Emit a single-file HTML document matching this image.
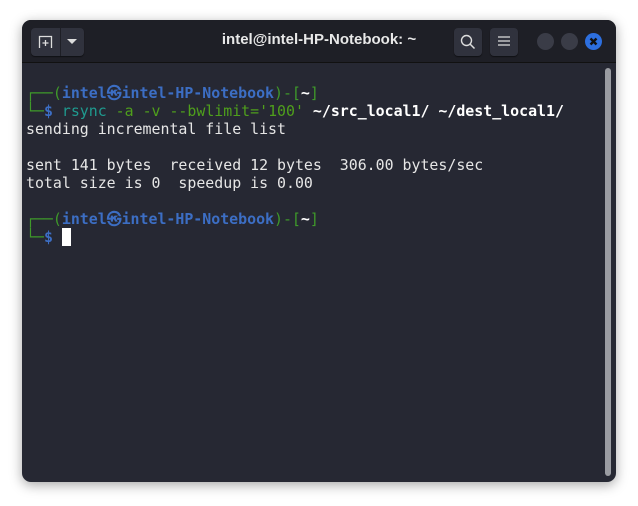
<!DOCTYPE html>
<html><head><style>
body{margin:0;width:638px;height:506px;background:#fff;position:relative;overflow:hidden;font-family:"Liberation Sans",sans-serif}
.win{position:absolute;left:22px;top:20px;width:594px;height:462px;background:#262833;border-radius:9px;box-shadow:0 3px 12px rgba(0,0,0,.35);overflow:hidden}
.tb{position:absolute;left:0;top:0;width:594px;height:42px;background:#1e1f26;border-bottom:1px solid #111}
.btn{position:absolute;top:8px;height:28px;background:#30323d;border-radius:4px;box-shadow:0 1px 1px rgba(0,0,0,.5)}
.title{position:absolute;top:11px;left:0;width:594px;text-align:center;color:#e8e8e8;font-weight:bold;font-size:15px}
.c{position:absolute;top:13px;width:17px;height:17px;border-radius:50%;background:#3a3c47}
.term{position:absolute;left:4px;top:64px;font-family:"DejaVu Sans Mono","Liberation Mono",monospace;font-size:14.9px;line-height:18px;color:#e6e6e6;white-space:pre}
.g{color:#3f9a2a}.b{color:#3c6ec4;font-weight:bold}.t{color:#1f9a8f}.a{color:#4f9f1c}.w{color:#fff;font-weight:bold}
.sb{position:absolute;left:583px;top:48px;width:6px;height:408px;background:#9a9ca2;border-radius:3px}
</style></head><body>
<div class="win">
<div class="tb">
<div class="btn" style="left:9px;width:53px"></div>
<div style="position:absolute;left:38px;top:8px;width:1px;height:28px;background:#1e1f26"></div>
<svg style="position:absolute;left:16px;top:15px" width="16" height="14"><path d="M1.5 13V1.5h12V13" fill="none" stroke="#ddd" stroke-width="1.3"/><path d="M7.5 5v6M4.5 8h6" stroke="#ddd" stroke-width="1.3"/></svg>
<svg style="position:absolute;left:45px;top:19px" width="10" height="6"><path d="M0 0h10L5 5z" fill="#ddd"/></svg>
<div class="title">intel@intel-HP-Notebook: ~</div>
<div class="btn" style="left:432px;width:28px"></div>
<svg style="position:absolute;left:438px;top:14px" width="16" height="16"><circle cx="6.5" cy="6.5" r="5" fill="none" stroke="#ddd" stroke-width="1.4"/><path d="M10 10l4.5 4.5" stroke="#ddd" stroke-width="1.5"/></svg>
<div class="btn" style="left:468px;width:28px"></div>
<svg style="position:absolute;left:476px;top:16px" width="12" height="10"><path d="M0 1h12M0 5h12M0 9h12" stroke="#ddd" stroke-width="1.2"/></svg>
<div class="c" style="left:515px"></div>
<div class="c" style="left:539px"></div>
<div class="c" style="left:563px;background:#2d6fdf"></div>
<svg style="position:absolute;left:563px;top:13px" width="17" height="17"><path d="M5.5 5.5l6 6M11.5 5.5l-6 6" stroke="#111" stroke-width="2.4"/></svg>
</div>
<div class="term"><span class="g">┌──(</span><span class="b">intel㉿intel-HP-Notebook</span><span class="g">)-[</span><span class="w">~</span><span class="g">]</span>
<span class="g">└─</span><span class="b">$</span> <span class="t">rsync</span> <span class="a">-a -v --bwlimit='100'</span> <span class="w">~/src_local1/ ~/dest_local1/</span>
sending incremental file list

sent 141 bytes  received 12 bytes  306.00 bytes/sec
total size is 0  speedup is 0.00

<span class="g">┌──(</span><span class="b">intel㉿intel-HP-Notebook</span><span class="g">)-[</span><span class="w">~</span><span class="g">]</span>
<span class="g">└─</span><span class="b">$</span> <span style="background:#fff"> </span></div>
<div class="sb"></div>
</div>
</body></html>
